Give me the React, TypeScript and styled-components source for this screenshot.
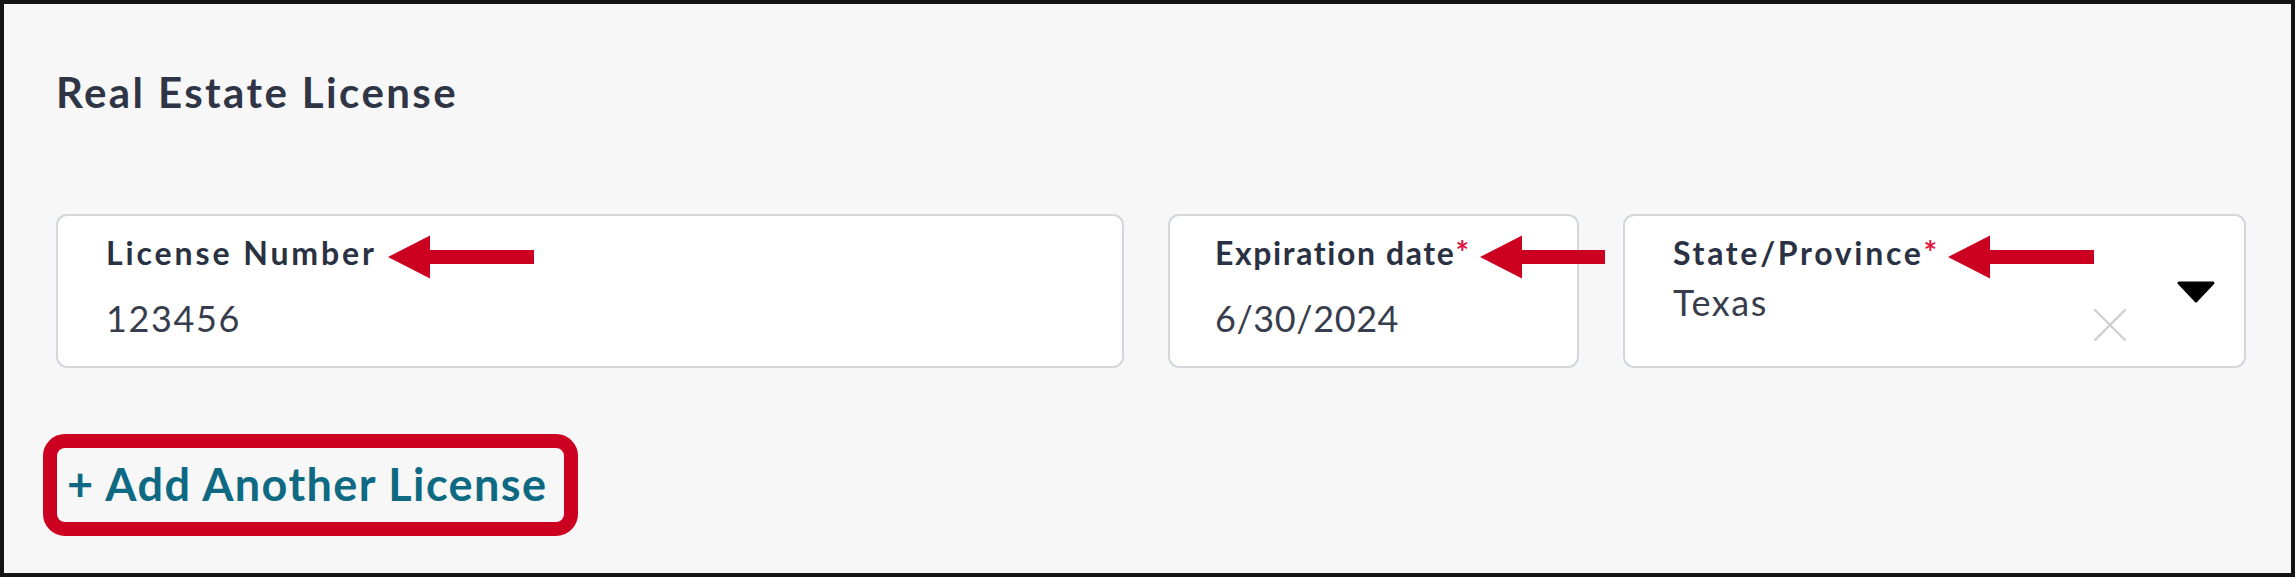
import React from "react";
import styled, { createGlobalStyle } from "styled-components";

const Global = createGlobalStyle`
  html, body { margin: 0; padding: 0; background: #ffffff; }
  * { box-sizing: border-box; }
  body { font-family: Lato, "Liberation Sans", sans-serif; }
`;

const Frame = styled.section`
  width: 2295px;
  height: 577px;
  border: 4px solid #141414;
  background: #f7f7f7;
  padding: 63px 0 0 52px;
  display: flex;
  flex-direction: column;
  align-items: flex-start;
`;

const Title = styled.h2`
  margin: 0;
  font-size: 42px;
  line-height: 1.2;
  font-weight: 700;
  color: #2f3545;
  letter-spacing: 2.4px;
`;

const Row = styled.div`
  margin-top: 97px;
  display: grid;
  grid-template-columns: 1068px 411px 623px;
  column-gap: 44px;
`;

const FieldBox = styled.div<{ $padLeft: number }>`
  height: 154px;
  background: #ffffff;
  border: 2px solid #d3d7dc;
  border-radius: 11px;
  padding: 18px 29px 0 ${(p) => p.$padLeft}px;
  display: flex;
  align-items: flex-start;
`;

const FieldContent = styled.div`
  flex: 1;
  display: flex;
  flex-direction: column;
  align-items: flex-start;
`;

const Label = styled.span<{ $tracking: number }>`
  position: relative;
  font-size: 32px;
  line-height: 1.2;
  font-weight: 700;
  color: #2a3142;
  letter-spacing: ${(p) => p.$tracking}px;
  white-space: nowrap;
`;

const Star = styled.span`
  color: #e5143f;
  letter-spacing: 0;
`;

const Value = styled.span<{ $gap: number; $tracking: number }>`
  margin-top: ${(p) => p.$gap}px;
  font-size: 36px;
  line-height: 1.2;
  font-weight: 400;
  color: #373d4c;
  letter-spacing: ${(p) => p.$tracking}px;
`;

const ArrowMark = styled.svg`
  position: absolute;
  left: calc(100% + 11px);
  top: 50%;
  transform: translateY(calc(-50% + 3px));
  overflow: visible;
`;

const ClearIcon = styled.svg`
  margin-top: 74px;
  flex: none;
`;

const Caret = styled.svg`
  margin-top: 47px;
  margin-left: 50px;
  flex: none;
`;

const AddButton = styled.button`
  margin-top: 66px;
  margin-left: -13px;
  height: 102px;
  border: 14px solid #cc0020;
  border-radius: 22px;
  background: transparent;
  padding: 0 17px 3px 10px;
  font-family: Lato, "Liberation Sans", sans-serif;
  font-size: 45px;
  line-height: 1.2;
  font-weight: 700;
  color: #0e6a82;
  letter-spacing: 1.4px;
  cursor: pointer;
  display: flex;
  align-items: center;
`;

function Arrow({ length }: { length: number }) {
  const L = length;
  return (
    <ArrowMark width={L} height={43} viewBox={`0 0 ${L} 43`}>
      <polygon
        points={`0,21.5 42,0 42,14.5 ${L},14.5 ${L},28.5 42,28.5 42,43`}
        fill="#cc0020"
      />
    </ArrowMark>
  );
}

type FieldProps = {
  label: string;
  required?: boolean;
  value: string;
  arrow: number;
  gap: number;
  padLeft: number;
  labelTracking: number;
  valueTracking: number;
  children?: React.ReactNode;
};

function Field({
  label,
  required,
  value,
  arrow,
  gap,
  padLeft,
  labelTracking,
  valueTracking,
  children,
}: FieldProps) {
  return (
    <FieldBox $padLeft={padLeft}>
      <FieldContent>
        <Label $tracking={labelTracking}>
          {label}
          {required && <Star>*</Star>}
          <Arrow length={arrow} />
        </Label>
        <Value $gap={gap} $tracking={valueTracking}>
          {value}
        </Value>
      </FieldContent>
      {children}
    </FieldBox>
  );
}

export default function App() {
  return (
    <>
      <Global />
      <Frame>
        <Title>Real Estate License</Title>
        <Row>
          <Field
            label="License Number"
            value="123456"
            arrow={146}
            gap={24}
            padLeft={48}
            labelTracking={2.9}
            valueTracking={1.6}
          />
          <Field
            label="Expiration date"
            required
            value="6/30/2024"
            arrow={125}
            gap={24}
            padLeft={45}
            labelTracking={1.6}
            valueTracking={0.6}
          />
          <Field
            label="State/Province"
            required
            value="Texas"
            arrow={146}
            gap={8}
            padLeft={48}
            labelTracking={2.7}
            valueTracking={1.6}
          >
            <ClearIcon width={34} height={34} viewBox="0 0 34 34">
              <path
                d="M1.5 1.5 L32.5 32.5 M32.5 1.5 L1.5 32.5"
                stroke="#cfcfcf"
                strokeWidth={2.4}
                fill="none"
              />
            </ClearIcon>
            <Caret width={38} height={22} viewBox="0 0 38 22">
              <polygon
                points="2,2 36,2 19,20"
                fill="#000"
                stroke="#000"
                strokeWidth={3}
                strokeLinejoin="round"
              />
            </Caret>
          </Field>
        </Row>
        <AddButton type="button">+ Add Another License</AddButton>
      </Frame>
    </>
  );
}
